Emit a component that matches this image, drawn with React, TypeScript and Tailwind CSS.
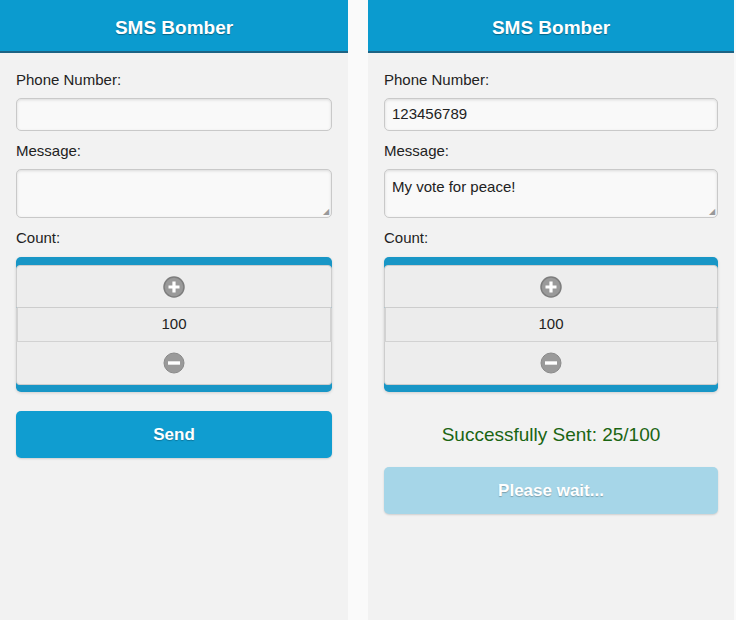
import React from "react";

function PlusIcon() {
  return (
    <svg width="22" height="22" viewBox="0 0 22 22">
      <circle cx="11" cy="11" r="10" fill="#9a9a9a" stroke="#7d7d7d" strokeWidth="1.5" />
      <path d="M11 5.5v11M5.5 11h11" stroke="#fff" strokeWidth="3.2" />
    </svg>
  );
}

function MinusIcon() {
  return (
    <svg width="22" height="22" viewBox="0 0 22 22">
      <circle cx="11" cy="11" r="10" fill="#9a9a9a" stroke="#8a8a8a" strokeWidth="1" />
      <path d="M5 11h12" stroke="#fff" strokeWidth="3.4" />
    </svg>
  );
}

function Panel({
  width,
  phone,
  message,
  sending,
}: {
  width: string;
  phone: string;
  message: string;
  sending: boolean;
}) {
  return (
    <div className={`${width} flex flex-col bg-[#f2f2f2]`}>
      <div className="flex h-[53px] items-center justify-center border-b-2 border-[#1d6384] bg-[#0b9bcf] pt-[5px]">
        <span className="text-[19px] font-bold text-white [text-shadow:0_1px_1px_rgba(0,0,0,0.35)]">
          SMS Bomber
        </span>
      </div>

      <div className="flex flex-col px-4 pt-[17px] pr-[16px]">
        <label className="text-[15px] leading-[20px] text-[#222]">Phone Number:</label>
        <div className="mt-[8px] flex h-[33px] items-center rounded-[5px] border border-[#c9c9c9] bg-[#f9f9f9] px-[7px] text-[15px] text-[#222] shadow-[inset_0_1px_3px_rgba(0,0,0,0.12)]">
          {phone}
        </div>

        <label className="mt-[10px] text-[15px] leading-[20px] text-[#222]">Message:</label>
        <div className="relative mt-[8px] flex h-[49px] rounded-[5px] border border-[#c9c9c9] bg-[#f9f9f9] px-[7px] pt-[6px] text-[15px] text-[#222] shadow-[inset_0_1px_3px_rgba(0,0,0,0.12)]">
          {message}
          <span className="absolute right-[2px] bottom-[1px] text-[8px] leading-none text-[#999]">◢</span>
        </div>

        <label className="mt-[10px] text-[15px] leading-[20px] text-[#222]">Count:</label>
        <div className="mt-[9px] overflow-hidden rounded-[5px] border-t-[8px] border-b-[7px] border-[#1896c6] bg-[#1896c6] shadow-[0_1px_3px_rgba(0,0,0,0.15)]">
          <div className="flex h-[43px] items-center justify-center rounded-t-[4px] border border-[#cdcdcd] bg-[#ededed]">
            <PlusIcon />
          </div>
          <div className="flex h-[34px] items-center justify-center border-x-2 border-b border-[#d2d2d2] bg-[#ececec] text-[15px] text-[#222]">
            100
          </div>
          <div className="flex h-[43px] items-center justify-center rounded-b-[4px] border border-t-0 border-[#cdcdcd] bg-[#ededed]">
            <MinusIcon />
          </div>
        </div>

        {sending && (
          <div className="mt-[31px] text-center text-[19px] leading-[24px] text-[#1a6512]">
            Successfully Sent: 25/100
          </div>
        )}

        <button
          className={`${sending ? "mt-[20px] bg-[#a6d6e8]" : "mt-[19px] bg-[#109dd0]"} flex h-[47px] items-center justify-center rounded-[5px] text-[17px] font-bold text-white shadow-[0_1px_2px_rgba(0,0,0,0.15)] [text-shadow:0_1px_1px_rgba(0,0,0,0.25)]`}
        >
          {sending ? "Please wait..." : "Send"}
        </button>
      </div>
    </div>
  );
}

export default function App() {
  return (
    <div className="flex h-[620px] w-[736px] gap-[20px] bg-[#fafafa] font-['Liberation_Sans',Arial,sans-serif]">
      <Panel width="w-[348px]" phone="" message="" sending={false} />
      <Panel width="w-[366px]" phone="123456789" message="My vote for peace!" sending={true} />
    </div>
  );
}
